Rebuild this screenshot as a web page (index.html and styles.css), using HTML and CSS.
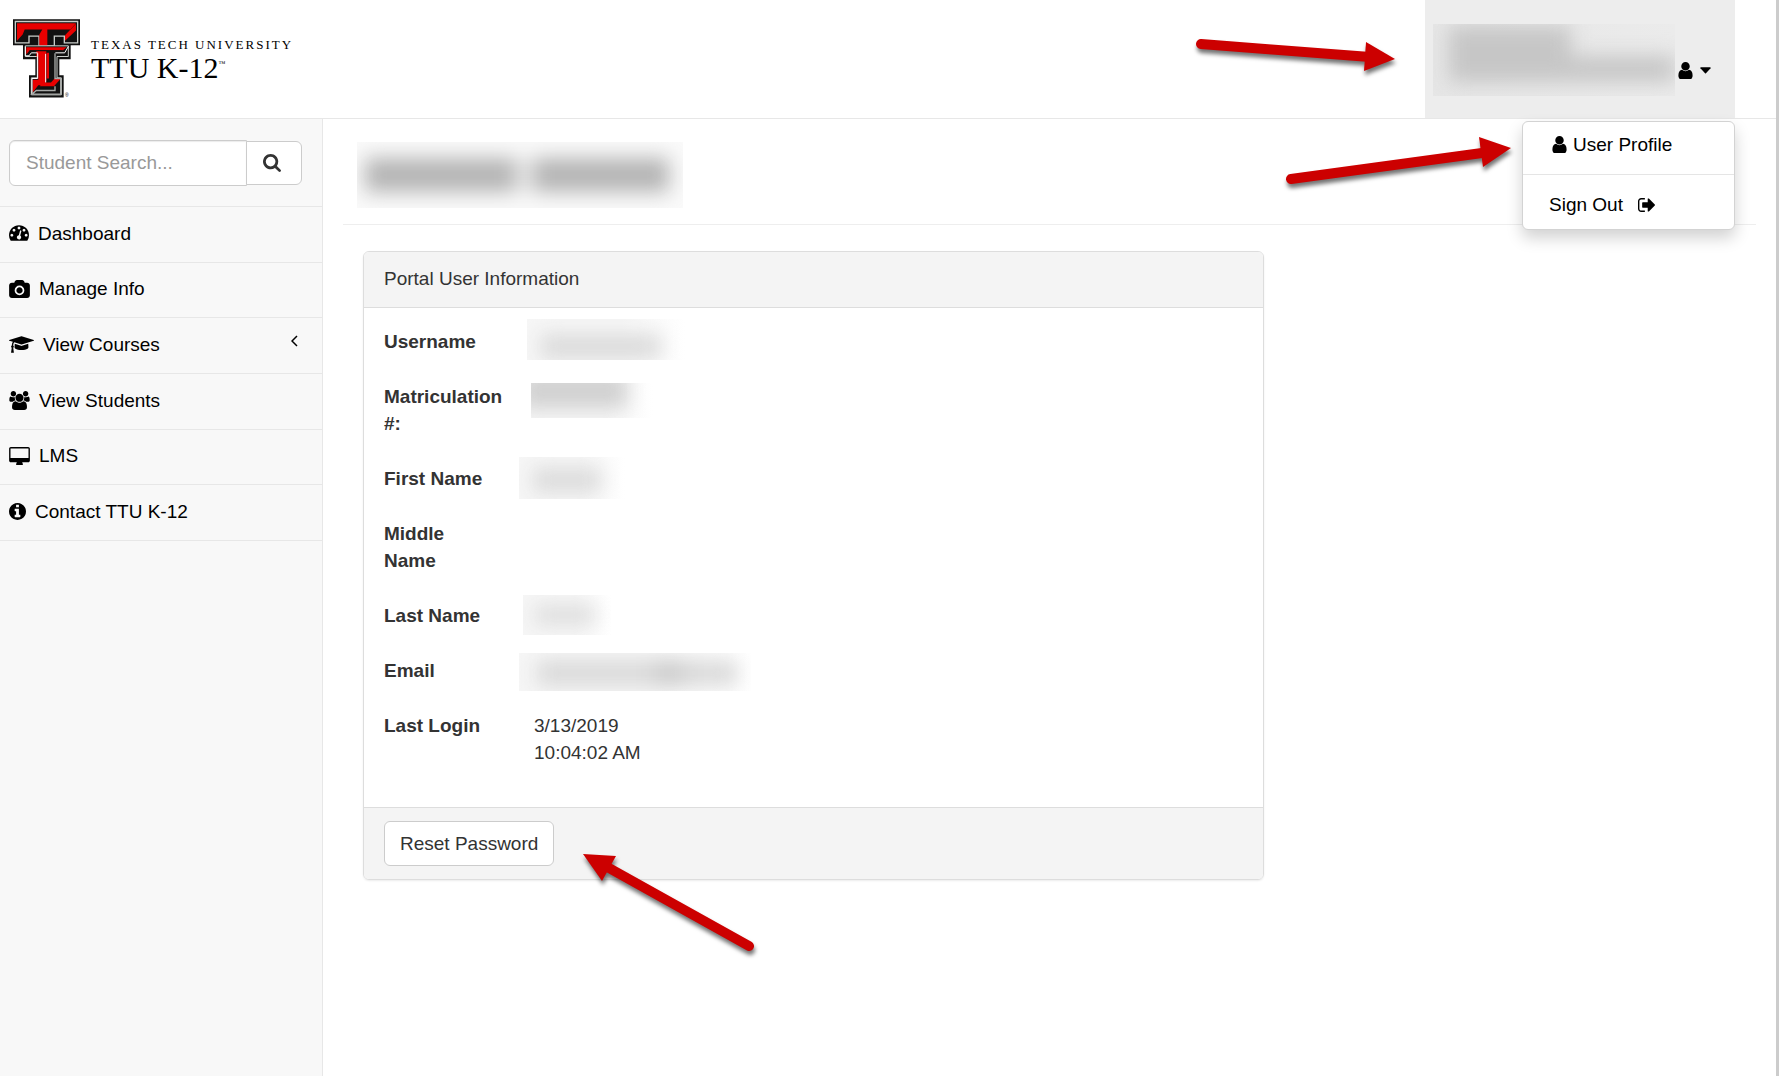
FILE: index.html
```html
<!DOCTYPE html>
<html lang="en">
<head>
<meta charset="utf-8">
<meta name="viewport" content="width=device-width, initial-scale=1">
<title>TTU K-12 Portal</title>
<link rel="stylesheet" href="styles.css">
</head>
<body>
<header class="topbar">
  <a class="brand" href="#">
    <svg class="brand-mark" viewBox="10 12 201 236" aria-hidden="true">
      <path fill="#111" d="M10 12H211V90H183V132H149V180H162V247H58V180H77V132H40V90H10Z"/>
      <path fill="#111" stroke="#c9cdc9" stroke-width="4" d="M17 19H204V83H164V63H134V92H88V63H58V83H17Z"/>
      <path fill="#e80000" d="M22 24H199L182 43H113V92H89V58L98 43H45L39 58L22 77Z"/>
      <path fill="#e80000" d="M199 26V46L166 77V60Z"/>
      <path fill="#111" stroke="#c9cdc9" stroke-width="3" d="M47 92H176V124H142V188H155V239H65V188H83V124H47Z"/>
      <path fill="#e80000" d="M50 96H171L160 105H60L50 118Z"/>
      <path fill="#111" d="M60 105H160L149 113H60Z"/>
      <path fill="#e80000" d="M80 108H110V198L98 210H86L69 232V194H86V124H80Z"/>
      <path fill="none" stroke="#fff" stroke-width="3" d="M47 94V122H58L65 113H84M176 94L165 113H137M84 114V190H67V237M108 116V203"/>
      <path fill="#e80000" d="M111 113H118V190H111ZM124 202L134 191H153L143 202L133 213H90L100 202Z"/>
      <path fill="none" stroke="#a8aaa8" stroke-width="4" d="M136 114V190H153V237H67L80 226H136V213"/>
    </svg>
    <span class="brand-text">
      <span class="brand-university">TEXAS TECH UNIVERSITY</span>
      <span class="brand-name">TTU K-12<sup>™</sup></span>
    </span>
    <span class="registered">®</span>
  </a>
  <div class="account">
    <button class="account-toggle" type="button" aria-label="Account menu" aria-expanded="true">
      <span class="redacted redacted-account"></span>
      <span class="account-icons">
        <svg class="icon-user" viewBox="256 128 1280 1536" aria-hidden="true"><path d="M1536 1399q0 109-62.500 187t-150.500 78h-854q-88 0-150.500-78t-62.500-187q0-85 8.500-160.500t31.500-152 58.500-131 94-89 134.500-34.500q131 128 313 128t313-128q76 0 134.500 34.500t94 89 58.500 131 31.500 152 8.500 160.500zm-256-887q0 159-112.500 271.500t-271.500 112.500-271.500-112.500-112.500-271.500 112.500-271.500 271.500-112.500 271.500 112.500 112.500 271.500z"/></svg>
        <svg class="icon-caret" viewBox="0 0 12 7" aria-hidden="true"><path d="M1 0H11Q12 0 11.500 1L6.500 6.500Q6 7 5.500 6.500L.5 1Q0 0 1 0Z"/></svg>
      </span>
    </button>
    <ul class="account-menu">
      <li><a href="#"><svg class="icon-user" viewBox="256 128 1280 1536" aria-hidden="true"><path d="M1536 1399q0 109-62.500 187t-150.500 78h-854q-88 0-150.500-78t-62.500-187q0-85 8.500-160.500t31.500-152 58.500-131 94-89 134.500-34.500q131 128 313 128t313-128q76 0 134.500 34.500t94 89 58.500 131 31.500 152 8.500 160.500zm-256-887q0 159-112.500 271.500t-271.500 112.500-271.500-112.500-112.500-271.500 112.500-271.500 271.500-112.500 271.500 112.500 112.500 271.500z"/></svg>User Profile</a></li>
      <li class="sign-out"><a href="#">Sign Out<svg class="icon-out" viewBox="64 256 1568 1280" aria-hidden="true"><path d="M704 1440q0 4 1 20t.5 26.500-3 23.500-10 19.500-20.500 6.500h-320q-119 0-203.500-84.500t-84.500-203.500v-704q0-119 84.500-203.500t203.500-84.500h320q13 0 22.500 9.500t9.500 22.500q0 4 1 20t.5 26.500-3 23.500-10 19.500-20.500 6.500h-320q-66 0-113 47t-47 113v704q0 66 47 113t113 47h312l11.500 1 11.500 3 8 5.500 7 9 2 13.500zm928-544q0 26-19 45l-544 544q-19 19-45 19t-45-19-19-45v-288h-448q-26 0-45-19t-19-45v-384q0-26 19-45t45-19h448v-288q0-26 19-45t45-19 45 19l544 544q19 19 19 45z"/></svg></a></li>
    </ul>
    <svg class="arrow arrow-account" viewBox="0 0 210 50" aria-hidden="true"><path class="shaft" d="M10 19L179 32"/><path class="head" d="M175 17L204 34L173 46Z"/></svg>
    <svg class="arrow arrow-profile" viewBox="0 0 240 60" aria-hidden="true"><path class="shaft" d="M11 49L202 23"/><path class="head" d="M199 7L231 18L203 37Z"/></svg>
  </div>
</header>
<div class="page">
  <nav class="sidebar" aria-label="Main">
    <form class="search">
      <input type="search" placeholder="Student Search..." aria-label="Student search">
      <button type="button" aria-label="Search"><svg viewBox="64 128 1664 1664" aria-hidden="true"><path d="M1216 832q0-185-131.500-316.500t-316.500-131.500-316.500 131.500-131.500 316.500 131.500 316.500 316.500 131.500 316.500-131.500 131.500-316.500zm512 832q0 52-38 90t-90 38q-54 0-90-38l-343-342q-179 124-399 124-143 0-273.500-55.500t-225-150-150-225-55.500-273.500 55.500-273.500 150-225 225-150 273.500-55.500 273.500 55.500 225 150 150 225 55.500 273.500q0 220-124 399l343 343q37 37 37 90z"/></svg></button>
    </form>
    <ul class="menu">
      <li><a href="#"><svg width="20" height="16" viewBox="0 256 1792 1408" aria-hidden="true"><path d="M384 1152q0-53-37.500-90.500t-90.500-37.500-90.500 37.500-37.500 90.500 37.500 90.500 90.500 37.500 90.500-37.500 37.500-90.500zm192-448q0-53-37.500-90.500t-90.500-37.500-90.500 37.500-37.500 90.500 37.500 90.500 90.500 37.500 90.500-37.500 37.500-90.500zm428 481l101-382q6-26-7.500-48.500t-38.500-29.500-48 6.500-30 39.500l-101 382q-60 5-107 43.500t-63 98.500q-20 77 20 146t117 89 146-20 89-117q16-60-6-117t-72-91zm660-33q0-53-37.500-90.500t-90.500-37.500-90.500 37.500-37.500 90.500 37.500 90.500 90.500 37.500 90.500-37.500 37.500-90.500zm-640-640q0-53-37.500-90.500t-90.500-37.500-90.500 37.500-37.500 90.500 37.500 90.500 90.500 37.500 90.500-37.500 37.500-90.500zm448 192q0-53-37.500-90.500t-90.500-37.500-90.500 37.500-37.500 90.500 37.500 90.500 90.500 37.500 90.500-37.500 37.500-90.500zm320 448q0 261-141 483-19 29-54 29h-1402q-35 0-54-29-141-221-141-483 0-182 71-348t191-286 286-191 348-71 348 71 286 191 191 286 71 348z"/></svg>Dashboard</a></li>
      <li><a href="#"><svg width="21" height="18" viewBox="0 0 1920 1664" aria-hidden="true"><path d="M960 672q119 0 203.500 84.500t84.500 203.500-84.500 203.500-203.500 84.500-203.500-84.500-84.500-203.500 84.500-203.500 203.500-84.500zm704-416q106 0 181 75t75 181v896q0 106-75 181t-181 75h-1408q-106 0-181-75t-75-181v-896q0-106 75-181t181-75h224l51-136q19-49 69.500-84.500t103.500-35.500h512q53 0 103.500 35.500t69.500 84.500l51 136h224zm-704 1152q185 0 316.500-131.500t131.500-316.500-131.500-316.500-316.500-131.500-316.500 131.500-131.500 316.500 131.500 316.500 316.500 131.500z"/></svg>Manage Info</a></li>
      <li><a href="#"><svg width="25" height="17" viewBox="0 128 2304 1536" aria-hidden="true"><path d="M1774 836l18 316q4 69-82 128t-235 93.500-323 34.500-323-34.500-235-93.500-82-128l18-316 574 181q22 7 48 7t48-7zm530-324q0 23-22 31l-1120 352q-4 1-10 1t-10-1l-652-206q-43 34-71 111.500t-34 178.500q63 36 63 109 0 69-58 107l58 433q2 14-8 25-9 11-24 11h-192q-15 0-24-11-10-11-8-25l58-433q-58-38-58-107 0-73 65-111 11-207 98-330l-333-104q-22-8-22-31t22-31l1120-352q4-1 10-1t10 1l1120 352q22 8 22 31z"/></svg>View Courses<svg class="chevron" viewBox="0 0 7 12" aria-hidden="true"><path d="M6 1L1 6L6 11"/></svg></a></li>
      <li><a href="#"><svg width="21" height="19" viewBox="64 0 1920 1792" aria-hidden="true"><path d="M657 896q-162 5-265 128h-134q-82 0-138-40.500t-56-118.500q0-353 124-353 6 0 43.500 21t97.500 42.500 119 21.500q67 0 133-23-5 37-5 66 0 139 81 256zm1071 637q0 120-73 189.500t-194 69.500h-874q-121 0-194-69.500t-73-189.500q0-53 3.500-103.500t14-109 26.500-108.500 43-97.500 62-81 85.500-53.500 111.500-20q10 0 43 21.500t73 48 107 48 135 21.500 135-21.500 107-48 73-48 43-21.500q61 0 111.500 20t85.500 53.500 62 81 43 97.500 26.500 108.500 14 109 3.500 103.500zm-1024-1277q0 106-75 181t-181 75-181-75-75-181 75-181 181-75 181 75 75 181zm704 384q0 159-112.500 271.500t-271.500 112.500-271.500-112.500-112.500-271.500 112.500-271.500 271.500-112.500 271.500 112.500 112.500 271.500zm576 225q0 78-56 118.500t-138 40.500h-134q-103-123-265-128 81-117 81-256 0-29-5-66 66 23 133 23 59 0 119-21.500t97.500-42.500 43.500-21q124 0 124 353zm-128-609q0 106-75 181t-181 75-181-75-75-181 75-181 181-75 181 75 75 181z"/></svg>View Students</a></li>
      <li><a href="#"><svg width="21" height="18" viewBox="0 0 1920 1664" aria-hidden="true"><path d="M1792 992v-832q0-13-9.500-22.500t-22.500-9.500h-1600q-13 0-22.500 9.500t-9.500 22.500v832q0 13 9.500 22.500t22.500 9.500h1600q13 0 22.500-9.500t9.500-22.500zm128-832v1088q0 66-47 113t-113 47h-544q0 37 16 77.500t32 71 16 43.500q0 26-19 45t-45 19h-512q-26 0-45-19t-19-45q0-14 16-44t32-70 16-78h-544q-66 0-113-47t-47-113v-1088q0-66 47-113t113-47h1600q66 0 113 47t47 113z"/></svg>LMS</a></li>
      <li><a href="#"><svg width="17" height="17" viewBox="128 128 1536 1536" aria-hidden="true"><path d="M1152 1376v-160q0-14-9-23t-23-9h-96v-512q0-14-9-23t-23-9h-320q-14 0-23 9t-9 23v160q0 14 9 23t23 9h96v320h-96q-14 0-23 9t-9 23v160q0 14 9 23t23 9h448q14 0 23-9t9-23zm-128-896v-160q0-14-9-23t-23-9h-192q-14 0-23 9t-9 23v160q0 14 9 23t23 9h192q14 0 23-9t9-23zm640 416q0 209-103 385.500t-279.500 279.500-385.500 103-385.500-103-279.500-279.500-103-385.500 103-385.500 279.500-279.500 385.500-103 385.500 103 279.500 279.500 103 385.500z"/></svg>Contact TTU K-12</a></li>
    </ul>
  </nav>
  <main class="content">
    <div class="page-heading"><span class="redacted redacted-heading"></span></div>
    <section class="panel">
      <h2 class="panel-heading">Portal User Information</h2>
      <dl class="panel-body">
        <dt>Username</dt><dd><span class="redacted redacted-username"></span></dd>
        <dt>Matriculation #:</dt><dd><span class="redacted redacted-matriculation"></span></dd>
        <dt>First Name</dt><dd><span class="redacted redacted-first"></span></dd>
        <dt>Middle<br>Name</dt><dd></dd>
        <dt>Last Name</dt><dd><span class="redacted redacted-last"></span></dd>
        <dt>Email</dt><dd><span class="redacted redacted-email"></span></dd>
        <dt>Last Login</dt><dd>3/13/2019 10:04:02 AM</dd>
      </dl>
      <div class="panel-footer">
        <button class="reset" type="button">Reset Password</button>
        <svg class="arrow arrow-reset" viewBox="0 0 190 120" aria-hidden="true"><path class="shaft" d="M176 102L36 24"/><path class="head" d="M10 10L43 12L29 37Z"/></svg>
      </div>
    </section>
  </main>
</div>
</body>
</html>
```

FILE: styles.css
```css
* { box-sizing: border-box; }

body {
  margin: 0;
  min-height: 100vh;
  display: flex;
  flex-direction: column;
  border-right: 3px solid #ccc;
  background: #fff;
  color: #333;
  font-family: "Liberation Sans", Arial, sans-serif;
  font-size: 19px;
  line-height: 27px;
}

a { color: #000; text-decoration: none; }
ul { list-style: none; margin: 0; padding: 0; }
button, input { font: inherit; color: inherit; }
svg { flex: none; fill: currentColor; }

/* Top bar */
.topbar {
  display: flex;
  justify-content: space-between;
  border-bottom: 1px solid #e7e7e7;
}
.brand {
  position: relative;
  display: flex;
  align-items: flex-start;
  gap: 11px;
  padding: 19px 0 0 13px;
}
.brand-mark { width: 67px; height: 79px; }
.brand-text {
  display: flex;
  flex-direction: column;
  padding-top: 18px;
  font-family: "Liberation Serif", "Times New Roman", serif;
}
.brand-university { font-size: 13px; line-height: 16px; letter-spacing: 2px; }
.brand-name { font-size: 30px; line-height: 30px; }
.brand-name sup { font-size: 7px; line-height: 8px; vertical-align: 12px; }
.registered { position: absolute; left: 65px; top: 90px; font-size: 5px; line-height: 10px; }

.account { position: relative; margin-right: 41px; color: #000; }
.account-toggle {
  display: flex;
  align-items: flex-end;
  gap: 3px;
  padding: 24px 24px 22px 8px;
  border: 0;
  background: #ededed;
}
.account-icons { display: flex; align-items: center; gap: 7px; padding-bottom: 17px; }
.icon-user { width: 15px; height: 17px; }
.icon-caret { width: 11px; height: 7px; }
.icon-out { width: 17px; height: 14px; }

.account-menu {
  position: absolute;
  z-index: 2;
  top: 121px;
  right: 0;
  width: 213px;
  border: 1px solid #d3d3d3;
  border-radius: 6px;
  background: #fff;
  box-shadow: 0 8px 16px rgba(0, 0, 0, .18);
}
.account-menu a { display: flex; align-items: center; gap: 6px; padding: 9px 24px 16px 29px; }
.account-menu .sign-out { border-top: 1px solid #e5e5e5; }
.account-menu .sign-out a { gap: 15px; padding: 16px 26px 11px; }

/* Page */
.page { flex: 1; display: flex; }
.sidebar {
  flex: none;
  width: 323px;
  border-right: 1px solid #e7e7e7;
  background: #f8f8f8;
}
.search {
  display: flex;
  align-items: center;
  padding: 21px 20px 20px 9px;
  border-bottom: 1px solid #e7e7e7;
}
.search input {
  flex: 1;
  min-width: 0;
  height: 46px;
  padding: 0 16px;
  border: 1px solid #ccc;
  border-radius: 6px 0 0 6px;
  background: #fff;
  box-shadow: inset 0 1px 1px rgba(0, 0, 0, .08);
}
.search input::placeholder { color: #999; opacity: 1; }
.search button {
  display: flex;
  align-items: center;
  width: 56px;
  height: 44px;
  margin-left: -1px;
  padding: 0 16px;
  border: 1px solid #ccc;
  border-radius: 0 6px 6px 0;
  background: #fff;
}
.search svg { width: 18px; height: 18px; }

.menu { display: grid; grid-auto-rows: 1fr; height: 334px; }
.menu li { display: flex; border-bottom: 1px solid #e7e7e7; }
.menu a { flex: 1; display: flex; align-items: center; gap: 9px; padding: 0 24px 2px 9px; }
.chevron {
  width: 7px;
  height: 12px;
  margin: 0 0 8px auto;
  fill: none;
  stroke: #000;
  stroke-width: 1.500;
}

.content { flex: 1; min-width: 0; padding: 0 20px; }
.page-heading { padding: 23px 14px 16px; border-bottom: 1px solid #eee; }

.panel {
  width: calc(66.667% - 41px);
  margin: 26px 20px;
  border: 1px solid #ddd;
  border-radius: 6px;
  box-shadow: 0 1px 2px rgba(0, 0, 0, .08);
}
.panel-heading {
  margin: 0;
  padding: 13px 20px 15px;
  border-bottom: 1px solid #ddd;
  border-radius: 5px 5px 0 0;
  background: #f4f4f4;
  font-size: 19px;
  font-weight: 400;
  line-height: 27px;
}
.panel-body {
  display: grid;
  grid-template-columns: 120px 140px;
  gap: 28px 30px;
  margin: 0;
  padding: 20px 20px 41px;
}
.panel-body dt { font-weight: 700; }
.panel-body dd { position: relative; margin: 0; }
.panel-footer {
  position: relative;
  padding: 13px 20px;
  border-top: 1px solid #ddd;
  border-radius: 0 0 5px 5px;
  background: #f4f4f4;
}
.reset {
  display: block;
  height: 45px;
  padding: 0 15px 1px;
  border: 1px solid #ccc;
  border-radius: 6px;
  background: #fff;
}

/* Hidden personal details */
.redacted { display: block; position: relative; overflow: hidden; background: #fafafa; }
.redacted::before {
  content: "";
  position: absolute;
  inset: 12px 18px;
  background: #d9d9d9;
  filter: blur(10px);
}
dd .redacted { position: absolute; background: linear-gradient(90deg, #f6f6f6 60%, #fff); }
.redacted-account { width: 242px; height: 72px; background: linear-gradient(90deg, #e6e6e6, #ebebeb); }
.redacted-account::before {
  inset: 2px 0 14px 16px;
  background:
    linear-gradient(#c6c6c6, #c6c6c6) 0 0 / 122px 100% no-repeat,
    linear-gradient(#c6c6c6, #c6c6c6) 0 100% / 100% 26px no-repeat;
}
.redacted-heading { width: 326px; height: 66px; }
.redacted-heading::before {
  inset: 16px 14px 16px 8px;
  background: linear-gradient(90deg, #b4b4b4 49%, #e8e8e8 50%, #e8e8e8 55%, #b4b4b4 56%);
}
.redacted-username { left: -7px; top: -9px; width: 158px; height: 41px; }
.redacted-username::before { inset: 16px 24px 2px 14px; }
.redacted-matriculation { left: -3px; top: 0; width: 122px; height: 35px; }
.redacted-matriculation::before { inset: -10px 26px 10px -10px; background: #d0d0d0; }
.redacted-first { left: -15px; top: -8px; width: 106px; height: 42px; }
.redacted-first::before { inset: 12px 24px 8px 14px; }
.redacted-last { left: -11px; top: -7px; width: 88px; height: 40px; }
.redacted-last::before { inset: 12px 16px 12px 12px; }
.redacted-email { left: -15px; top: -4px; width: 232px; height: 38px; }
.redacted-email::before { inset: 8px 14px 6px 18px; background: linear-gradient(90deg, #d8d8d8 55%, #c4c4c4 66%, #d8d8d8 78%); }

/* Callout arrows */
.arrow {
  position: absolute;
  z-index: 3;
  overflow: visible;
  pointer-events: none;
  filter: drop-shadow(1px 4px 2px rgba(0, 0, 0, .55));
}
.shaft { fill: none; stroke: #c00; stroke-width: 10; stroke-linecap: round; }
.head { fill: #c00; }
.arrow-account { top: 25px; right: 334px; width: 210px; height: 50px; }
.arrow-profile { top: 130px; right: 215px; width: 240px; height: 60px; }
.arrow-reset { top: 36px; left: 209px; width: 190px; height: 120px; }
```
